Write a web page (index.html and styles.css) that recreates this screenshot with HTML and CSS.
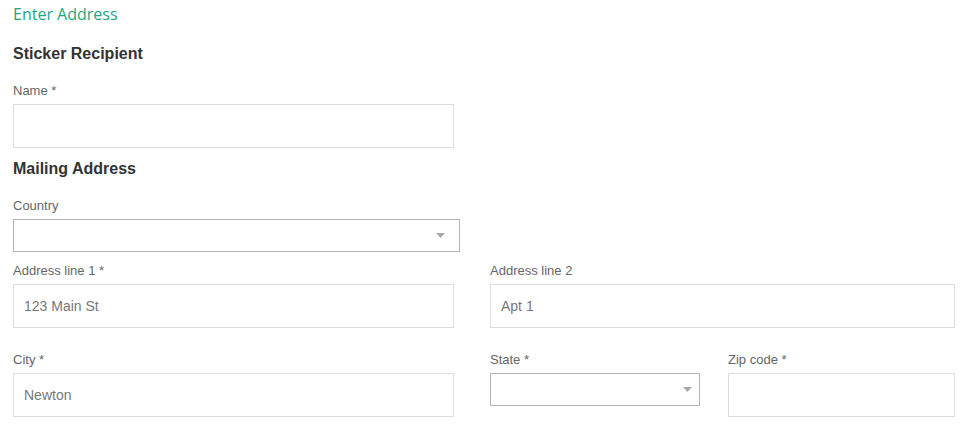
FILE: index.html
```html
<!DOCTYPE html>
<html lang="en">
<head>
<meta charset="utf-8">
<title>Enter Address</title>
<link rel="stylesheet" href="styles.css">
</head>
<body>
<div class="page">
  <div class="title">Enter Address</div>

  <h2 class="heading first">Sticker Recipient</h2>
  <div class="field name-field">
    <label class="label">Name *</label>
    <input class="input" type="text">
  </div>

  <h2 class="heading second">Mailing Address</h2>
  <div class="field country-field">
    <label class="label">Country</label>
    <div class="select country-select">
      <svg class="arrow" width="9" height="5" viewBox="0 0 9 5"><path d="M0 0H9L4.5 5Z" fill="#a9a9a9"/></svg>
    </div>
  </div>

  <div class="row row-address">
    <div class="field">
      <label class="label">Address line 1 *</label>
      <input class="input" type="text" placeholder="123 Main St">
    </div>
    <div class="field">
      <label class="label">Address line 2</label>
      <input class="input" type="text" placeholder="Apt 1">
    </div>
  </div>

  <div class="row row-city">
    <div class="field">
      <label class="label">City *</label>
      <input class="input" type="text" placeholder="Newton">
    </div>
    <div class="subrow">
      <div class="field">
        <label class="label">State *</label>
        <div class="select state-select">
          <svg class="arrow" width="9" height="5" viewBox="0 0 9 5"><path d="M0 0H9L4.5 5Z" fill="#a9a9a9"/></svg>
        </div>
      </div>
      <div class="field">
        <label class="label">Zip code *</label>
        <input class="input" type="text">
      </div>
    </div>
  </div>
</div>
</body>
</html>
```

FILE: styles.css
```css
* {
  box-sizing: border-box;
}

html, body {
  margin: 0;
  padding: 0;
  background: #ffffff;
}

body {
  font-family: "Liberation Sans", Arial, Helvetica, sans-serif;
  color: #333333;
}

.page {
  padding: 3px 14px 0 13px;
  width: 969px;
}

.title {
  font-family: "Open Sans", "Liberation Sans", sans-serif;
  font-size: 16px;
  line-height: 22px;
  height: 22px;
  color: #1ba882;
}

.heading {
  margin: 0;
  font-size: 16px;
  line-height: 20px;
  font-weight: bold;
  color: #333333;
}

.heading.first {
  margin-top: 19px;
}

.heading.second {
  margin-top: 11px;
}

.field {
  display: flex;
  flex-direction: column;
  gap: 5px;
}

.label {
  display: block;
  font-size: 13px;
  line-height: 16px;
  color: #666666;
}

.input {
  display: block;
  width: 100%;
  height: 44px;
  margin: 0;
  padding: 0 10px;
  border: 1px solid #dddddd;
  border-radius: 0;
  background: #ffffff;
  font-family: "Liberation Sans", Arial, Helvetica, sans-serif;
  font-size: 14px;
  color: #555555;
  outline: none;
}

.input::placeholder {
  color: #777777;
  opacity: 1;
}

.select {
  display: flex;
  align-items: center;
  justify-content: flex-end;
  height: 33px;
  border: 1px solid #b4b4b4;
  background: #ffffff;
}

.arrow {
  display: block;
}

.name-field {
  margin-top: 19px;
  width: 441px;
}

.country-field {
  margin-top: 19px;
  width: 447px;
}

.country-select {
  padding-right: 14px;
}

.state-select {
  padding-right: 7px;
}

.row {
  display: grid;
  grid-template-columns: 441px 465px;
  column-gap: 36px;
}

.row-address {
  margin-top: 11px;
}

.row-city {
  margin-top: 24px;
}

.subrow {
  display: grid;
  grid-template-columns: 210px 227px;
  column-gap: 28px;
  align-items: start;
}
```
